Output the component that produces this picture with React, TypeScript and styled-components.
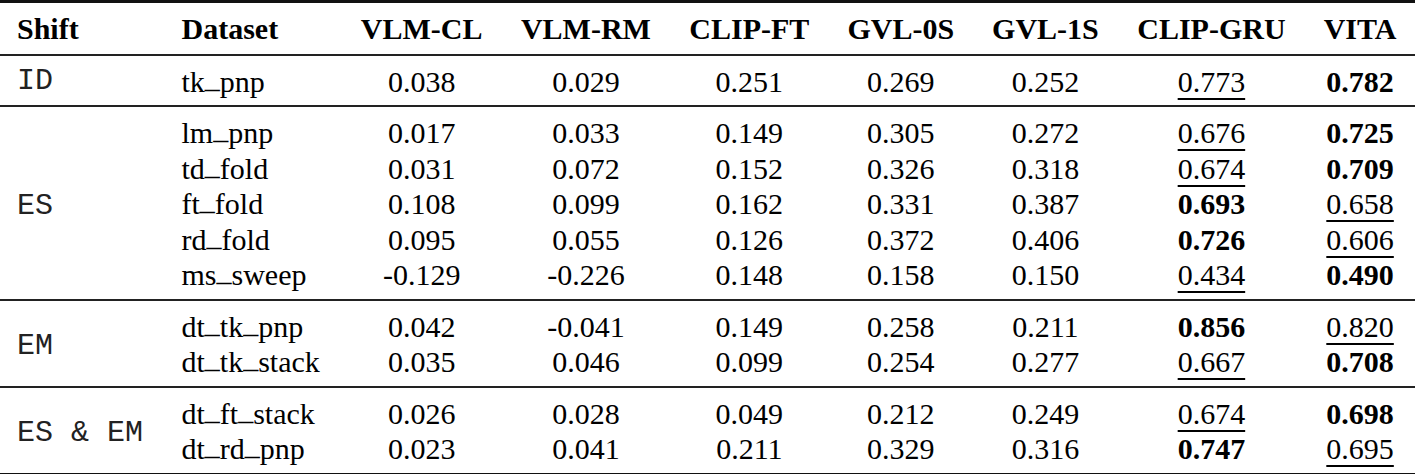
import React from 'react';
import styled, { createGlobalStyle } from 'styled-components';

type Mark = 'b' | 'u' | '';
type Row = { name: string; vals: string[]; marks: Mark[] };
type Group = { shift: string; rows: Row[] };

const cols = ['VLM-CL', 'VLM-RM', 'CLIP-FT', 'GVL-0S', 'GVL-1S', 'CLIP-GRU', 'VITA'];

const m = (gru: Mark, vita: Mark): Mark[] => ['', '', '', '', '', gru, vita];

const groups: Group[] = [
  {
    shift: 'ID',
    rows: [{ name: 'tk_pnp', vals: ['0.038', '0.029', '0.251', '0.269', '0.252', '0.773', '0.782'], marks: m('u', 'b') }],
  },
  {
    shift: 'ES',
    rows: [
      { name: 'lm_pnp', vals: ['0.017', '0.033', '0.149', '0.305', '0.272', '0.676', '0.725'], marks: m('u', 'b') },
      { name: 'td_fold', vals: ['0.031', '0.072', '0.152', '0.326', '0.318', '0.674', '0.709'], marks: m('u', 'b') },
      { name: 'ft_fold', vals: ['0.108', '0.099', '0.162', '0.331', '0.387', '0.693', '0.658'], marks: m('b', 'u') },
      { name: 'rd_fold', vals: ['0.095', '0.055', '0.126', '0.372', '0.406', '0.726', '0.606'], marks: m('b', 'u') },
      { name: 'ms_sweep', vals: ['-0.129', '-0.226', '0.148', '0.158', '0.150', '0.434', '0.490'], marks: m('u', 'b') },
    ],
  },
  {
    shift: 'EM',
    rows: [
      { name: 'dt_tk_pnp', vals: ['0.042', '-0.041', '0.149', '0.258', '0.211', '0.856', '0.820'], marks: m('b', 'u') },
      { name: 'dt_tk_stack', vals: ['0.035', '0.046', '0.099', '0.254', '0.277', '0.667', '0.708'], marks: m('u', 'b') },
    ],
  },
  {
    shift: 'ES & EM',
    rows: [
      { name: 'dt_ft_stack', vals: ['0.026', '0.028', '0.049', '0.212', '0.249', '0.674', '0.698'], marks: m('u', 'b') },
      { name: 'dt_rd_pnp', vals: ['0.023', '0.041', '0.211', '0.329', '0.316', '0.747', '0.695'], marks: m('b', 'u') },
    ],
  },
];

// dataset names use a low underscore like LaTeX's \_
const DatasetName: React.FC<{ name: string }> = ({ name }) => {
  const parts = name.split('_');
  return (
    <>
      {parts.map((p, i) => (
        <React.Fragment key={i}>
          {i > 0 && <Underscore>_</Underscore>}
          {p}
        </React.Fragment>
      ))}
    </>
  );
};

const App: React.FC = () => {
  return (
    <>
      <GlobalStyle />
      <Table>
        <thead>
          <HeadRow>
            <HeadCell>Shift</HeadCell>
            <HeadCell>Dataset</HeadCell>
            {cols.map((c) => (
              <HeadCell key={c} $center>
                {c}
              </HeadCell>
            ))}
          </HeadRow>
        </thead>
        {groups.map((g, gi) => (
          <Section key={g.shift} $last={gi === groups.length - 1}>
            {g.rows.map((r, ri) => (
              <tr key={r.name}>
                {ri === 0 && <ShiftCell rowSpan={g.rows.length}>{g.shift}</ShiftCell>}
                <Cell>
                  <DatasetName name={r.name} />
                </Cell>
                {r.vals.map((v, vi) => (
                  <Cell key={vi} $center>
                    <Value $mark={r.marks[vi]}>{v}</Value>
                  </Cell>
                ))}
              </tr>
            ))}
          </Section>
        ))}
      </Table>
    </>
  );
};

export default App;

const GlobalStyle = createGlobalStyle`
  html, body {
    margin: 0;
    padding: 0;
    background: #ffffff;
  }
  body {
    font-family: "Liberation Serif", "Times New Roman", serif;
    color: #000;
  }
`;

const Table = styled.table`
  width: 1415px;
  border-collapse: collapse;
  font-size: 30px;
  line-height: 35.5px;
  border-top: 3px solid #111;
  border-bottom: 3px solid #111;
`;

const HeadRow = styled.tr`
  border-bottom: 2px solid #222;
`;

const HeadCell = styled.th<{ $center?: boolean }>`
  font-weight: 700;
  text-align: ${(p) => (p.$center ? 'center' : 'left')};
  padding: 8px 17px 7px;
  white-space: nowrap;
`;

const Section = styled.tbody<{ $last: boolean }>`
  border-bottom: ${(p) => (p.$last ? 'none' : '2px solid #222')};
  tr:first-child td {
    padding-top: 8px;
  }
  tr:last-child td {
    padding-bottom: 6px;
  }
`;

const Cell = styled.td<{ $center?: boolean }>`
  text-align: ${(p) => (p.$center ? 'center' : 'left')};
  padding: 0 17px;
  white-space: nowrap;
`;

const ShiftCell = styled.td`
  font-family: "Liberation Mono", "Courier New", monospace;
  font-size: 30px;
  vertical-align: middle;
  padding: 0 17px;
  white-space: pre;
  color: #222;
`;

const Underscore = styled.span`
  line-height: 0;
  vertical-align: 0.14em;
`;

const Value = styled.span<{ $mark: Mark }>`
  font-weight: ${(p) => (p.$mark === 'b' ? 700 : 400)};
  text-decoration: ${(p) => (p.$mark === 'u' ? 'underline' : 'none')};
  text-decoration-thickness: 1.5px;
  text-underline-offset: 6px;
`;
